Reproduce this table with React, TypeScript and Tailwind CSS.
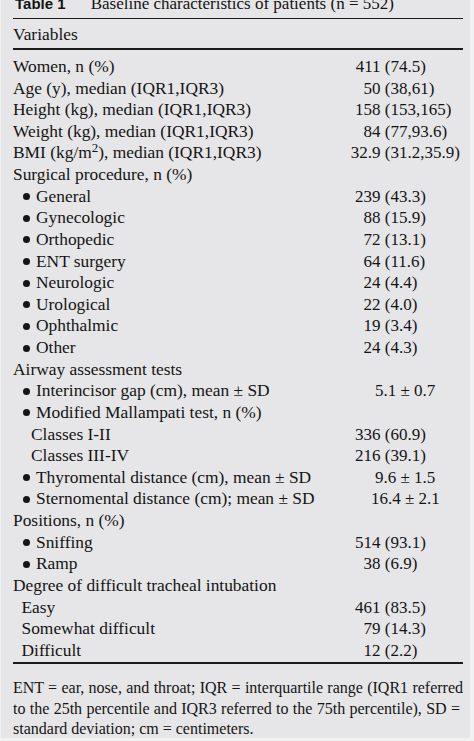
import React from "react";

type Row = {
  label: React.ReactNode;
  kind: "top" | "bullet" | "sub" | "sub2";
  left?: string;
  right?: string;
  pm?: "a" | "b";
};

const rows: Row[] = [
  { label: "Women, n (%)", kind: "top", left: "411", right: " (74.5)" },
  { label: "Age (y), median (IQR1,IQR3)", kind: "top", left: "50", right: " (38,61)" },
  { label: "Height (kg), median (IQR1,IQR3)", kind: "top", left: "158", right: " (153,165)" },
  { label: "Weight (kg), median (IQR1,IQR3)", kind: "top", left: "84", right: " (77,93.6)" },
  {
    label: (
      <>
        BMI (kg/m<sup>2</sup>), median (IQR1,IQR3)
      </>
    ),
    kind: "top",
    left: "32.9",
    right: " (31.2,35.9)",
  },
  { label: "Surgical procedure, n (%)", kind: "top" },
  { label: "General", kind: "bullet", left: "239", right: " (43.3)" },
  { label: "Gynecologic", kind: "bullet", left: "88", right: " (15.9)" },
  { label: "Orthopedic", kind: "bullet", left: "72", right: " (13.1)" },
  { label: "ENT surgery", kind: "bullet", left: "64", right: " (11.6)" },
  { label: "Neurologic", kind: "bullet", left: "24", right: " (4.4)" },
  { label: "Urological", kind: "bullet", left: "22", right: " (4.0)" },
  { label: "Ophthalmic", kind: "bullet", left: "19", right: " (3.4)" },
  { label: "Other", kind: "bullet", left: "24", right: " (4.3)" },
  { label: "Airway assessment tests", kind: "top" },
  { label: "Interincisor gap (cm), mean \u00b1 SD", kind: "bullet", right: "5.1 \u00b1 0.7", pm: "a" },
  { label: "Modified Mallampati test, n (%)", kind: "bullet" },
  { label: "Classes I-II", kind: "sub", left: "336", right: " (60.9)" },
  { label: "Classes III-IV", kind: "sub", left: "216", right: " (39.1)" },
  { label: "Thyromental distance (cm), mean \u00b1 SD", kind: "bullet", right: "9.6 \u00b1 1.5", pm: "a" },
  { label: "Sternomental distance (cm); mean \u00b1 SD", kind: "bullet", right: "16.4 \u00b1 2.1", pm: "b" },
  { label: "Positions, n (%)", kind: "top" },
  { label: "Sniffing", kind: "bullet", left: "514", right: " (93.1)" },
  { label: "Ramp", kind: "bullet", left: "38", right: " (6.9)" },
  { label: "Degree of difficult tracheal intubation", kind: "top" },
  { label: "Easy", kind: "sub2", left: "461", right: " (83.5)" },
  { label: "Somewhat difficult", kind: "sub2", left: "79", right: " (14.3)" },
  { label: "Difficult", kind: "sub2", left: "12", right: " (2.2)" },
];

function Label({ row }: { row: Row }) {
  if (row.kind === "bullet") {
    return (
      <div className="w-[317px] whitespace-nowrap text-[17.4px]">
        <span className="inline-block w-[7px] h-[7px] rounded-full bg-[#151515] align-middle ml-[10px] mr-[6px] relative top-[-1px]"></span>
        {row.label}
      </div>
    );
  }
  const pl = row.kind === "sub" ? "pl-[18px]" : row.kind === "sub2" ? "pl-[8.5px]" : "pl-0";
  return <div className={`w-[317px] whitespace-nowrap text-[17.4px] ${pl}`}>{row.label}</div>;
}

function Value({ row }: { row: Row }) {
  if (row.pm) {
    return (
      <div className={`whitespace-pre ${row.pm === "a" ? "pl-[45px]" : "pl-[41px]"}`}>{row.right}</div>
    );
  }
  if (row.left === undefined) return <div></div>;
  return (
    <div className="flex whitespace-pre">
      <span className="w-[50.5px] text-right">{row.left}</span>
      <span>{row.right}</span>
    </div>
  );
}

export default function App() {
  return (
    <div className="w-[474px] h-[741px] bg-[#f1f1f1] overflow-hidden">
      <div
        className="ml-[1px] w-[469px] h-[738px] bg-[#e6e6e8] text-[#141414] flex flex-col overflow-hidden"
        style={{ fontFamily: '"Liberation Serif", "Times New Roman", serif' }}
      >
        <div className="ml-[12px] w-[450px] flex flex-col">
          <div className="mt-[-4.75px] h-[17px] leading-[17px] text-[17px] flex whitespace-nowrap">
            <span
              className="font-bold text-[15px] ml-[2px] w-[75.7px]"
              style={{ fontFamily: '"Liberation Sans", Arial, sans-serif' }}
            >
              Table 1
            </span>
            <span>Baseline characteristics of patients (n = 552)</span>
          </div>
          <div className="mt-[5.5px] h-[1.5px] bg-[#1c1c1c]"></div>
          <div className="pt-[5px] pb-[2.5px] text-[17.4px] leading-[21.63px]">Variables</div>
          <div className="h-[1.6px] bg-[#1c1c1c]"></div>
          <div className="pt-[6px] pb-[1px] flex flex-col text-[17px] leading-[21.63px]">
            {rows.map((r, i) => (
              <div key={i} className="flex">
                <Label row={r} />
                <Value row={r} />
              </div>
            ))}
          </div>
          <div className="h-[1.6px] bg-[#1c1c1c]"></div>
          <div className="pt-[13.5px] text-[16px] leading-[20px]">
            <div className="text-justify [text-align-last:justify] whitespace-nowrap">
              ENT = ear, nose, and throat; IQR = interquartile range (IQR1 referred
            </div>
            <div className="text-justify [text-align-last:justify] w-[447px] mt-[1px]">
              to the 25th percentile and IQR3 referred to the 75th percentile), SD =
            </div>
            <div>standard deviation; cm = centimeters.</div>
          </div>
        </div>
      </div>
    </div>
  );
}
